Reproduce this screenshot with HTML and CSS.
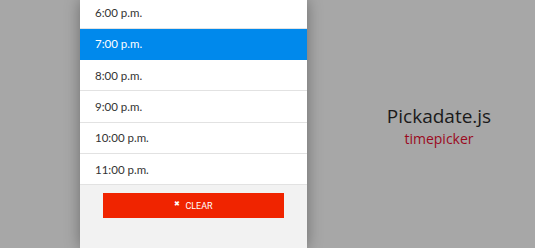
FILE: index.html
```html
<!DOCTYPE html>
<html lang="en">
<head>
    <meta charset="UTF-8">
    <title>Pickadate.js timepicker</title>
    <link rel="stylesheet" href="styles.css">
</head>
<body>
    <div class="picker">
        <ul class="time-list">
            <li class="time-item">6:00 p.m.</li>
            <li class="time-item selected">7:00 p.m.</li>
            <li class="time-item">8:00 p.m.</li>
            <li class="time-item">9:00 p.m.</li>
            <li class="time-item">10:00 p.m.</li>
            <li class="time-item">11:00 p.m.</li>
        </ul>
        <div class="picker-footer">
            <button class="clear-btn"><span class="clear-x">&#x2716;</span>Clear</button>
        </div>
    </div>

    <div class="title">
        <h1>Pickadate.js</h1>
        <p>timepicker</p>
    </div>
</body>
</html>
```

FILE: styles.css
```css
html, body {
    margin: 0;
    height: 100%;
}

body {
    background-color: #a7a7a7;
    display: flex;
    padding-left: 80px;
    overflow: hidden;
    font-family: Lato, 'Open Sans', sans-serif;
}

.picker {
    width: 227px;
    height: 248px;
    background-color: #fff;
    display: flex;
    flex-direction: column;
    box-shadow: 0 0 14px rgba(0, 0, 0, 0.35);
    flex-shrink: 0;
}

.time-list {
    list-style: none;
    margin: -2.6px 0 0;
    padding: 0;
}

.time-item {
    box-sizing: border-box;
    height: 31.33px;
    padding-left: 15px;
    display: flex;
    align-items: center;
    font-size: 11.5px;
    color: #333;
    border-bottom: 1px solid #e2e2e2;
}

.time-item.selected {
    background-color: #0089ec;
    color: #fff;
    border-bottom-color: #0089ec;
}

.picker-footer {
    flex: 1;
    background-color: #f2f2f2;
    padding: 8px 23px 0;
}

.clear-btn {
    width: 100%;
    height: 25px;
    border: none;
    background-color: #f02400;
    color: #fff;
    font-family: Roboto, sans-serif;
    font-size: 9px;
    text-transform: uppercase;
    display: flex;
    align-items: center;
    justify-content: center;
    padding: 0;
}

.clear-x {
    font-size: 7px;
    margin-right: 5px;
    position: relative;
    top: -2px;
}

.title {
    margin-left: 36px;
    width: 192px;
    text-align: center;
    padding-top: 104px;
}

.title h1 {
    margin: 0;
    font-family: 'Open Sans', sans-serif;
    font-weight: normal;
    font-size: 19px;
    color: #1a1a1a;
    line-height: 25px;
}

.title p {
    margin: 2px 0 0;
    font-family: 'Open Sans', sans-serif;
    font-size: 14px;
    color: #9b0a1e;
    line-height: 16px;
}
```
